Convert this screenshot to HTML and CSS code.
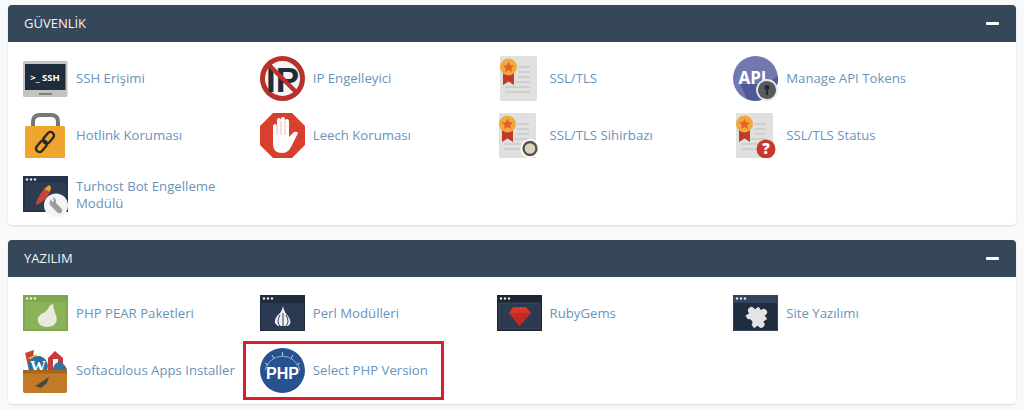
FILE: index.html
```html
<!DOCTYPE html>
<html lang="tr">
<head>
<meta charset="utf-8">
<title>cPanel</title>
<link rel="stylesheet" href="styles.css">
</head>
<body>
<section class="card card-security">
  <header class="card-head"><h2>GÜVENLİK</h2><span class="collapse"></span></header>
  <div class="items">
    <a class="item">
      <svg class="icon" viewBox="0 0 45 45"><rect x="0" y="5" width="44.500" height="36" rx="1.500" fill="#c3c3c1"/><rect x="2" y="8" width="40.500" height="26" fill="#1f2c3b"/><rect x="16" y="37" width="13" height="1.800" fill="#77797b"/><text x="22" y="25" class="t-ssh" text-anchor="middle">&gt;_ SSH</text></svg>
      <span>SSH Erişimi</span>
    </a>
    <a class="item">
      <svg class="icon" viewBox="0 0 45 45"><circle cx="22.500" cy="22.500" r="20" fill="#f4f4f4" stroke="#b8322b" stroke-width="5"/><text x="22.500" y="35.500" class="t-ip" text-anchor="middle">IP</text><path d="M8 8 L37 37" stroke="#b8322b" stroke-width="4.500"/></svg>
      <span>IP Engelleyici</span>
    </a>
    <a class="item">
      <svg class="icon" viewBox="0 0 45 45"><use href="#cert"/></svg>
      <span>SSL/TLS</span>
    </a>
    <a class="item">
      <svg class="icon" viewBox="0 0 45 45"><circle cx="22.500" cy="22.500" r="22.500" fill="#7178ae"/><path d="M7 28 H33 L45 20 A22.500 22.500 0 0 1 14 43 Z" fill="#4f5a96"/><text x="19.500" y="28" class="t-api" text-anchor="middle">API</text><circle cx="34" cy="34" r="10" fill="#585a5c" stroke="#e9e9ec" stroke-width="1.800"/><circle cx="34" cy="31.500" r="2.500" fill="#1e2a36"/><rect x="33" y="32" width="2" height="7" fill="#1e2a36"/></svg>
      <span>Manage API Tokens</span>
    </a>
    <a class="item">
      <svg class="icon" viewBox="0 0 45 45"><path d="M10 16 V9 Q10 2 17 2 H28 Q35 2 35 9 V16" fill="none" stroke="#77777a" stroke-width="4"/><rect x="2" y="13" width="40" height="32" rx="1.500" fill="#f0a52f"/><g fill="none" stroke="#2c2a25" stroke-width="2.400" transform="rotate(-50 22 29)"><rect x="10" y="25.500" width="13" height="7" rx="3.500"/><rect x="21" y="25.500" width="13" height="7" rx="3.500"/></g></svg>
      <span>Hotlink Koruması</span>
    </a>
    <a class="item">
      <svg class="icon" viewBox="0 0 45 45"><path d="M13 0 H32 L45 13 V32 L32 45 H13 L0 32 V13 Z" fill="#d8402d"/><path d="M13 14 Q13 11 15 11 Q17 11 17 14 V8 Q17 5 19 5 Q21 5 21 8 V6 Q21 4 23 4 Q25 4 25 6 V8 Q25 6 27 6 Q29 6 29 9 V24 L34 19 Q37 18 38 20 L31 34 Q28 40 22 40 Q13 40 13 31 Z" fill="#fff"/><path d="M17 12 V22 M21 8 V22 M25 8 V22" stroke="#e9a79d" stroke-width=".8"/></svg>
      <span>Leech Koruması</span>
    </a>
    <a class="item">
      <svg class="icon" viewBox="0 0 45 45"><use href="#cert" x="-1"/><circle cx="33" cy="35.500" r="9.500" fill="#fff"/><circle cx="33" cy="35.500" r="6.500" fill="#d8d2bf" stroke="#57544a" stroke-width="2.400"/></svg>
      <span>SSL/TLS Sihirbazı</span>
    </a>
    <a class="item">
      <svg class="icon" viewBox="0 0 45 45"><use href="#cert"/><circle cx="33" cy="36" r="9.500" fill="#c9392b"/><text x="33" y="41" class="t-q" text-anchor="middle">?</text></svg>
      <span>SSL/TLS Status</span>
    </a>
    <a class="item item-tall">
      <svg class="icon" viewBox="0 0 45 45"><rect y="4" width="45" height="36" fill="#25344a"/><rect x="2" y="11" width="41" height="27" fill="#2d3c50"/><g fill="#e8e8e8"><circle cx="4" cy="7.500" r="1.200"/><circle cx="8" cy="7.500" r="1.200"/><circle cx="12" cy="7.500" r="1.200"/></g><path d="M13 33 Q13 27 21 17 L27 20 Q22 30 13 33 Z" fill="#c94432"/><path d="M21 17 L26 13 L28 15 L27 20 Z" fill="#ef9a35"/><circle cx="33" cy="33.500" r="12" fill="#f4f4f4"/><path d="M28 27 Q25 31 28 34 L35 41 Q37 42 39 40 Q40 38 38 36 L33 31 Q34 27 30 25 L31 29 L29 30 Z" fill="#9b9d9e"/></svg>
      <span>Turhost Bot Engelleme Modülü</span>
    </a>
  </div>
</section>

<section class="card card-software">
  <header class="card-head"><h2>YAZILIM</h2><span class="collapse"></span></header>
  <div class="items">
    <a class="item">
      <svg class="icon" viewBox="0 0 45 45"><rect y="4" width="45" height="36" fill="#7fa84c"/><rect x="2" y="11" width="41" height="27" fill="#8cb35a"/><g fill="#f0f4e6"><circle cx="4" cy="7.500" r="1.200"/><circle cx="8" cy="7.500" r="1.200"/><circle cx="12" cy="7.500" r="1.200"/></g><path d="M30 13 Q31 19 32 22 Q36 29 31 34 Q24 38 17 34 Q12 28 18 23 Q23 21 25 18 Q26 14 30 13 Z" fill="#e7ebdd"/></svg>
      <span>PHP PEAR Paketleri</span>
    </a>
    <a class="item">
      <svg class="icon" viewBox="0 0 45 45"><rect y="4" width="45" height="36" fill="#1f2c3e"/><rect x="1" y="12" width="43" height="27" fill="#2a3a52"/><g fill="#e8e8e8"><circle cx="4" cy="7.500" r="1.200"/><circle cx="8" cy="7.500" r="1.200"/><circle cx="12" cy="7.500" r="1.200"/></g><path d="M23 15 Q24 21 28 25 Q33 32 28 35 H18 Q12 32 17 25 Q22 21 23 15 Z" fill="#f1f1f1"/><path d="M23 22 V35 M20 24 Q16 31 20 35 M26 24 Q30 31 26 35" stroke="#2a3a52" stroke-width="1" fill="none"/></svg>
      <span>Perl Modülleri</span>
    </a>
    <a class="item">
      <svg class="icon" viewBox="0 0 45 45"><rect y="4" width="45" height="36" fill="#1d2835"/><rect x="2" y="12" width="41" height="26" fill="#2c3b52" stroke="#46566b" stroke-width=".6"/><g fill="#e8e8e8"><circle cx="4" cy="7.500" r="1.200"/><circle cx="8" cy="7.500" r="1.200"/><circle cx="12" cy="7.500" r="1.200"/></g><path d="M16 16 H29 L34 22 L22.500 35 L12 22 Z" fill="#d9352b"/><path d="M12 22 H34 L22.500 35 Z" fill="#c32a22"/></svg>
      <span>RubyGems</span>
    </a>
    <a class="item">
      <svg class="icon" viewBox="0 0 45 45"><rect y="4" width="45" height="36" fill="#33445e"/><rect x="1" y="12" width="43" height="27" fill="#202d3f"/><g fill="#e8e8e8"><circle cx="4" cy="7.500" r="1.200"/><circle cx="8" cy="7.500" r="1.200"/><circle cx="12" cy="7.500" r="1.200"/></g><g fill="#e4e4e4" transform="rotate(-35 23 26)"><rect x="15" y="19" width="16" height="15"/><circle cx="23" cy="18" r="3.400"/><circle cx="32" cy="26.500" r="3.400"/><circle cx="14" cy="26.500" r="3.400" fill="#202d3f"/><circle cx="23" cy="35" r="3.400"/></g></svg>
      <span>Site Yazılımı</span>
    </a>
    <a class="item">
      <svg class="icon" viewBox="0 0 45 45"><path d="M2 5 L11 2 L10 10 L18 8 L14 18 L5 18 Z" fill="#c8452f"/><path d="M5 10 L14 6 L12 13 Z" fill="#e7b53b"/><path d="M25 10 L32 3 L40 10 V22 H25 Z" fill="#c63b3b"/><path d="M30 11 H35 V21 H30 Z" fill="#fff"/><path d="M29 24 Q31 13 37 14 Q44 17 44 24 Z" fill="#2e73ac"/><circle cx="15" cy="18" r="10" fill="#2b6f9e"/><text x="15" y="24" class="t-w" text-anchor="middle">W</text><rect x="0" y="22" width="44" height="23" rx="2" fill="#c27a27"/><rect x="0" y="22" width="44" height="3.500" fill="#a9651c"/><path d="M12 38 L17 35 L26 29 L24 35 L18 40 Z" fill="#4b4a3a"/></svg>
      <span>Softaculous Apps Installer</span>
    </a>
    <a class="item item-marked">
      <svg class="icon" viewBox="0 0 45 45"><circle cx="22.500" cy="22.500" r="22.500" fill="#26528f"/><path d="M5 22 A18 18 0 0 1 40 22" fill="none" stroke="#8fb0d8" stroke-width="1"/><path d="M22.500 4 V8 M12 7 L14 10.500 M33 7 L31 10.500 M5 15 L8.500 17 M40 15 L36.500 17" stroke="#b6cbe6" stroke-width="1"/><text x="22.500" y="31" class="t-php" text-anchor="middle">PHP</text></svg>
      <span>Select PHP Version</span>
    </a>
  </div>
</section>

<svg class="defs" width="0" height="0" aria-hidden="true">
  <defs>
    <g id="cert">
      <rect x="3" y="0" width="37" height="45" rx="1" fill="#e0e0df"/>
      <path d="M21 11 H33 M21 16 H33 M21 21 H33 M18 26 H33 M8 31 H33 M8 36 H33" stroke="#bdbdbb" stroke-width="1.200"/>
      <path d="M6 14 H17 V29 L11.500 25.500 L6 29 Z" fill="#c0392b"/>
      <circle cx="11.500" cy="11" r="8.500" fill="#f0a93a"/>
      <path d="M11.500 5.500 L13.200 9.200 L17 9.600 L14.200 12.200 L15 16 L11.500 14.100 L8 16 L8.800 12.200 L6 9.600 L9.800 9.200 Z" fill="#e2632a"/>
    </g>
  </defs>
</svg>
</body>
</html>
```

FILE: styles.css
```css
*,
*::after {
  box-sizing: border-box;
}

html,
body {
  height: 100%;
}

body {
  margin: 0;
  padding: 5px 8px 0;
  overflow: hidden;
  background: #f8f9f9;
  font-family: "Open Sans", "Liberation Sans", sans-serif;
}

.card {
  background: #fff;
  border-radius: 4px;
  box-shadow: 0 1px 2px rgba(0, 0, 0, 0.12);
}

.card-security {
  height: 220px;
  margin-bottom: 15px;
}

.card-software {
  height: 164px;
}

.card-head {
  display: flex;
  align-items: center;
  justify-content: space-between;
  height: 37px;
  padding: 0 17px 0 16px;
  border-radius: 4px 4px 0 0;
  background: #37475a;
}

.card-head h2 {
  margin: 0;
  font-size: 13px;
  font-weight: 400;
  line-height: 17px;
  color: #f2f4f6;
}

.collapse {
  width: 13px;
  height: 3px;
  border-radius: 1px;
  background: #fff;
}

.items {
  display: grid;
  grid-template-columns: repeat(4, 1fr);
  align-items: center;
  row-gap: 12px;
  padding: 14px 46px 0 15px;
}

.item {
  position: relative;
  display: flex;
  align-items: center;
  gap: 8px;
  min-height: 45px;
  font-size: 13.200px;
  line-height: 17px;
  color: #6a93ba;
}

.item-tall {
  min-height: 49px;
}

.item-marked::after {
  content: "";
  position: absolute;
  top: -7.500px;
  left: -17px;
  width: 201px;
  height: 59px;
  border: 3px solid #d81e2c;
}

.icon {
  flex: none;
  width: 45px;
  height: 45px;
}

.defs {
  position: absolute;
}

.t-ssh {
  font-family: "Open Sans", sans-serif;
  font-size: 9.500px;
  font-weight: 700;
  fill: #fff;
}

.t-ip {
  font-family: "Liberation Sans", sans-serif;
  font-size: 35px;
  font-weight: 700;
  fill: #1f2c3b;
}

.t-api {
  font-family: "Open Sans", sans-serif;
  font-size: 17px;
  font-weight: 700;
  fill: #fff;
}

.t-q {
  font-family: "Open Sans", sans-serif;
  font-size: 15px;
  font-weight: 800;
  fill: #fff;
}

.t-w {
  font-family: "Liberation Serif", serif;
  font-size: 16px;
  font-weight: 700;
  fill: #fff;
}

.t-php {
  font-family: "Liberation Sans", sans-serif;
  font-size: 16px;
  font-weight: 700;
  fill: #fff;
}
```
